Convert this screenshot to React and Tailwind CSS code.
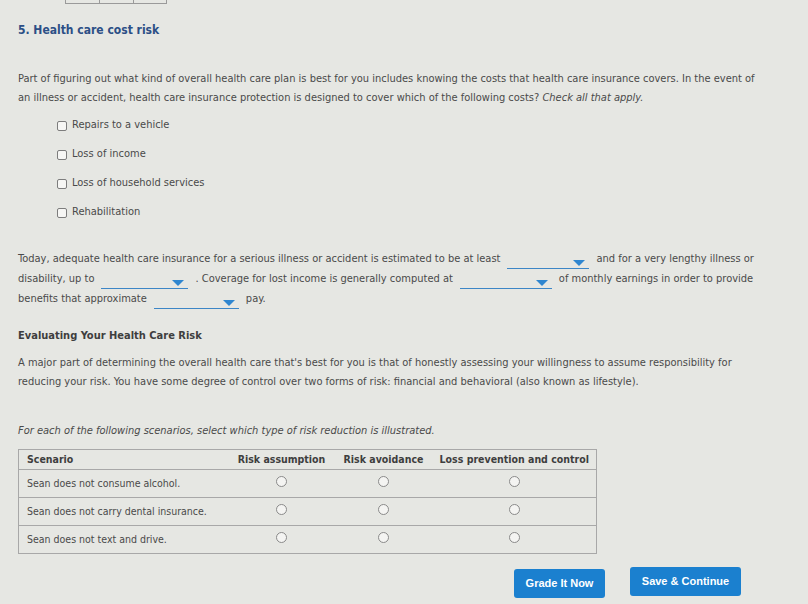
import { useState } from "react";

const font = { fontFamily: '"DejaVu Sans Condensed", "DejaVu Sans", Verdana, sans-serif' };

function Blank({ w = "w-[84px]" }) {
    return (
        <span className={`inline-flex ${w} h-[12px] items-end justify-end border-b border-[#3d86c6] mx-[7px] align-[-4px] pr-[4px] pb-[2px]`}>
            <span className="w-0 h-0 border-l-[6px] border-r-[6px] border-t-[6px] border-l-transparent border-r-transparent border-t-[#2f86d0]" />
        </span>
    );
}

const options = [
    "Repairs to a vehicle",
    "Loss of income",
    "Loss of household services",
    "Rehabilitation",
];

const rows = [
    "Sean does not consume alcohol.",
    "Sean does not carry dental insurance.",
    "Sean does not text and drive.",
];

function Radio() {
    return <span className="inline-block w-[11px] h-[11px] rounded-full border border-[#8a8a8a] bg-[#f4f4f2]" />;
}

export default function App() {
    const [checked, setChecked] = useState({});

    return (
        <div className="w-[808px] h-[604px] overflow-hidden bg-[#e6e7e3] text-[#4a4a4a] text-[11px]" style={font}>
            {/* bit of the previous table */}
            <div className="flex ml-[65px] h-[4px]">
                <div className="w-[35px] border border-t-0 border-[#9a9a9a]" />
                <div className="w-[34px] border border-t-0 border-l-0 border-[#9a9a9a]" />
                <div className="w-[33px] border border-t-0 border-l-0 border-[#9a9a9a]" />
            </div>

            <div className="px-[18px]">
                <h2 className="mt-[17px] text-[12px] font-bold text-[#2c4f86]">5. Health care cost risk</h2>

                <p className="mt-[30px] leading-[19px] pr-[20px]">
                    Part of figuring out what kind of overall health care plan is best for you includes knowing the costs that health care insurance covers. In the event of an illness or accident, health care insurance protection is designed to cover which of the following costs? <i>Check all that apply.</i>
                </p>

                <div className="mt-[12px] ml-[39px] flex flex-col gap-[16px]">
                    {options.map(o => (
                        <label key={o} className="flex items-center gap-[5px] h-[13px] cursor-pointer">
                            <span
                                onClick={() => setChecked(c => ({ ...c, [o]: !c[o] }))}
                                className={`w-[10px] h-[10px] rounded-[2px] border border-[#7d7d7d] ${checked[o] ? "bg-[#2f86d0]" : "bg-[#f6f6f4]"}`}
                            />
                            <span>{o}</span>
                        </label>
                    ))}
                </div>

                <p className="mt-[30px] leading-[19px] pr-[20px]">
                    Today, adequate health care insurance for a serious illness or accident is estimated to be at least<Blank w="w-[82px]" />and for a very lengthy illness or disability, up to<Blank w="w-[87px]" />. Coverage for lost income is generally computed at<Blank w="w-[92px]" />of monthly earnings in order to provide benefits that approximate<Blank w="w-[85px]" />pay.
                </p>

                <h3 className="mt-[19px] font-bold text-[#3e3e3e]">Evaluating Your Health Care Risk</h3>

                <p className="mt-[8px] leading-[19px] pr-[20px]">
                    A major part of determining the overall health care that's best for you is that of honestly assessing your willingness to assume responsibility for reducing your risk. You have some degree of control over two forms of risk: financial and behavioral (also known as lifestyle).
                </p>

                <p className="mt-[32px] italic">For each of the following scenarios, select which type of risk reduction is illustrated.</p>

                <table className="mt-[10px] w-[579px] border border-[#a8a8a8] border-collapse text-[10.5px]">
                    <thead>
                        <tr className="h-[20px] text-[#3e3e3e]">
                            <th className="text-left font-bold pl-[8px] w-[210px]">Scenario</th>
                            <th className="font-bold w-[106px]">Risk assumption</th>
                            <th className="font-bold w-[98px]">Risk avoidance</th>
                            <th className="font-bold">Loss prevention and control</th>
                        </tr>
                    </thead>
                    <tbody>
                        {rows.map(r => (
                            <tr key={r} className="h-[28px] border-t border-[#a8a8a8]">
                                <td className="pl-[8px]">{r}</td>
                                <td className="text-center"><Radio /></td>
                                <td className="text-center"><Radio /></td>
                                <td className="text-center"><Radio /></td>
                            </tr>
                        ))}
                    </tbody>
                </table>

                <div className="mt-[13px] flex justify-end gap-[25px] pr-[49px]" style={{ fontFamily: '"Liberation Sans", Arial, sans-serif' }}>
                    <button className="mt-[2px] w-[91px] h-[29px] rounded-[3px] bg-[#1b80cf] text-white text-[11px] font-bold">Grade It Now</button>
                    <button className="w-[111px] h-[29px] rounded-[3px] bg-[#1b80cf] text-white text-[11px] font-bold">Save &amp; Continue</button>
                </div>
            </div>
        </div>
    );
}
